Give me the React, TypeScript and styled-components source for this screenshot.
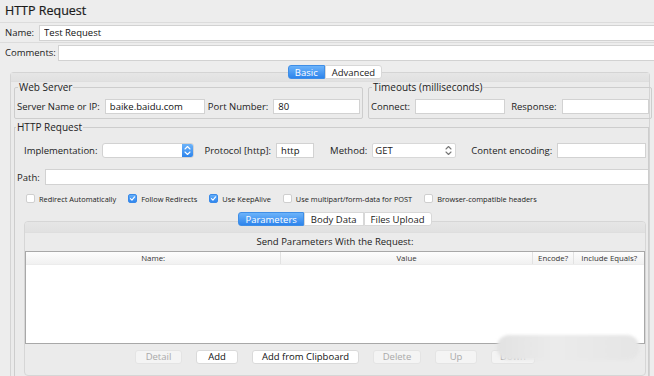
import React from "react";
import styled, { createGlobalStyle } from "styled-components";

const GlobalStyle = createGlobalStyle`
  html, body {
    margin: 0;
    padding: 0;
    background: #ededed;
    overflow: hidden;
  }
  body {
    font-family: "Open Sans", "DejaVu Sans", sans-serif;
    font-size: 9.5px;
    color: #222;
  }
`;

function CheckMark() {
  return (
    <svg width="9" height="9" viewBox="0 0 10 10">
      <path d="M2 5.2 L4.2 7.4 L8 2.6" fill="none" stroke="#fff" strokeWidth="1.6" strokeLinecap="round" strokeLinejoin="round" />
    </svg>
  );
}

function UpDown({ color }: { color: string }) {
  return (
    <svg width="7" height="11" viewBox="0 0 7 11">
      <path d="M1 4 L3.5 1.5 L6 4 M1 7 L3.5 9.5 L6 7" fill="none" stroke={color} strokeWidth="1.1" strokeLinecap="round" strokeLinejoin="round" />
    </svg>
  );
}

interface CheckProps {
  label: string;
  checked?: boolean;
}

function Check({ label, checked = false }: CheckProps) {
  return (
    <CheckItem>
      <CheckBox checked={checked}>{checked && <CheckMark />}</CheckBox>
      <CheckLabel>{label}</CheckLabel>
    </CheckItem>
  );
}

export default function App() {
  return (
    <Page>
      <GlobalStyle />
      <Title>HTTP Request</Title>
      <TopRow>
        <Label>Name:</Label>
        <WideInput value="Test Request" readOnly />
      </TopRow>
      <TopRow>
        <Label right={2}>Comments:</Label>
        <WideInput value="" readOnly />
      </TopRow>

      <TabBar top={3} shift={16} pad={6}>
        <Tab active>Basic</Tab>
        <Tab>Advanced</Tab>
      </TabBar>

      <OuterPanel>
        <PanelBand size={8} />
        <ServerRow>
          <Group grow={0} width={349}>
            <Legend>Web Server</Legend>
            <InlineRow>
              <Label>Server Name or IP:</Label>
              <Input width={100} value="baike.baidu.com" readOnly />
              <Label gap={3}>Port Number:</Label>
              <Input width={87} value="80" readOnly />
            </InlineRow>
          </Group>
          <Group grow={1}>
            <Legend>Timeouts (milliseconds)</Legend>
            <InlineRow>
              <Label>Connect:</Label>
              <Input width={90} value="" readOnly />
              <Label gap={6}>Response:</Label>
              <Input width={87} value="" readOnly />
            </InlineRow>
          </Group>
        </ServerRow>

        <RequestGroup>
          <Legend>HTTP Request</Legend>
          <ImplRow>
            <Label>Implementation:</Label>
            <Select width={92}>
              <span />
              <SelectArrow>
                <UpDown color="#fff" />
              </SelectArrow>
            </Select>
            <Label gap={10}>Protocol [http]:</Label>
            <Input width={38} value="http" readOnly />
            <Label gap={16}>Method:</Label>
            <PlainSelect width={84}>
              <span>GET</span>
              <UpDown color="#777" />
            </PlainSelect>
            <Label gap={15}>Content encoding:</Label>
            <Input width={89} value="" readOnly />
          </ImplRow>
          <PathRow>
            <Label>Path:</Label>
            <WideInput value="" readOnly />
          </PathRow>
          <CheckRow>
            <Check label="Redirect Automatically" />
            <Check label="Follow Redirects" checked />
            <Check label="Use KeepAlive" checked />
            <Check label="Use multipart/form-data for POST" />
            <Check label="Browser-compatible headers" />
          </CheckRow>

          <TabBar top={7} shift={7} pad={6}>
            <Tab active>Parameters</Tab>
            <Tab>Body Data</Tab>
            <Tab>Files Upload</Tab>
          </TabBar>

          <ParamPanel>
            <PanelBand size={10} />
            <ParamTitle>Send Parameters With the Request:</ParamTitle>
            <Table>
              <HeadRow>
                <HeadCell width={257}>Name:</HeadCell>
                <HeadCell width={253}>Value</HeadCell>
                <HeadCell width={42}>Encode?</HeadCell>
                <HeadCell width={70} last>Include Equals?</HeadCell>
              </HeadRow>
            </Table>
            <ButtonRow>
              <Button width={47} disabled>Detail</Button>
              <Button width={42}>Add</Button>
              <Button width={107}>Add from Clipboard</Button>
              <Button width={48} disabled>Delete</Button>
              <Button width={42} disabled>Up</Button>
              <Button width={44} disabled>Down</Button>
            </ButtonRow>
            <Smudge />
          </ParamPanel>
        </RequestGroup>
      </OuterPanel>
    </Page>
  );
}

const Page = styled.div`
  width: 654px;
  height: 376px;
  display: flex;
  flex-direction: column;
  background: #ededed;
`;

const Title = styled.div`
  height: 22px;
  padding-left: 5px;
  font-size: 12.5px;
  line-height: 22px;
  color: #1a1a1a;
  -webkit-text-stroke: 0.2px #1a1a1a;
`;

const TopRow = styled.div`
  display: flex;
  align-items: center;
  height: 17px;
  padding: 1px 0 1px 5px;
  border-top: 1px solid #dcdcdc;
`;

const Label = styled.span<{ gap?: number; right?: number }>`
  margin-left: ${({ gap }) => gap ?? 0}px;
  margin-right: ${({ right }) => right ?? 5}px;
  white-space: nowrap;
  font-size: 9.5px;
  color: #222;
`;

const inputBase = `
  box-sizing: border-box;
  height: 15px;
  border: 1px solid #d2d2d2;
  background: #fff;
  font-family: "Open Sans", "DejaVu Sans", sans-serif;
  font-size: 9.5px;
  color: #111;
  padding: 0 4px;
  outline: none;
`;

const WideInput = styled.input`
  ${inputBase}
  flex: 1;
  min-width: 0;
  border-right: none;
  height: 16px;
`;

const Input = styled.input<{ width: number }>`
  ${inputBase}
  flex: none;
  width: ${({ width }) => width}px;
`;

const TabBar = styled.div<{ top: number; shift: number; pad: number }>`
  position: relative;
  z-index: 1;
  display: flex;
  justify-content: center;
  margin-top: ${({ top }) => top}px;
  padding-left: ${({ shift }) => shift}px;
  height: 14px;

  & > div {
    padding: 0 ${({ pad }) => pad}px;
  }
`;

const Tab = styled.div<{ active?: boolean }>`
  box-sizing: border-box;
  height: 14px;
  font-size: 9.5px;
  line-height: 13px;
  border: 1px solid ${({ active }) => (active ? "#3f8ee6" : "#d8d8d8")};
  background: ${({ active }) => (active ? "linear-gradient(#6cb3fa, #2d84ec)" : "#fff")};
  color: ${({ active }) => (active ? "#fff" : "#222")};
  border-radius: ${({ active }) => (active ? "3px 0 0 3px" : "0")};
  &:last-child {
    border-radius: 0 3px 3px 0;
  }
`;

const OuterPanel = styled.div`
  flex: 1;
  margin: -7px 4px 0 10px;
  border: 1px solid #d4d4d4;
  border-bottom: none;
  border-radius: 4px 4px 0 0;
  background: #ebebeb;
  display: flex;
  flex-direction: column;
  padding: 0 0 0 3px;
`;

const PanelBand = styled.div<{ size: number }>`
  height: ${({ size }) => size}px;
  margin-left: -3px;
  background: linear-gradient(#e6e6e6, #e1e1e1);
  border-bottom: 1px solid #dedede;
`;

const ServerRow = styled.div`
  display: flex;
  gap: 5px;
`;

const Group = styled.fieldset<{ grow: number; width?: number }>`
  box-sizing: border-box;
  margin: 0;
  min-width: 0;
  flex: ${({ grow }) => grow} 0 auto;
  width: ${({ width }) => (width ? `${width}px` : "auto")};
  height: 37px;
  padding: 0 2px;
  border: 1px solid #cdcdcd;
  border-radius: 2px;
`;

const Legend = styled.legend`
  padding: 0 1px;
  margin-left: 1px;
  font-size: 10px;
  line-height: 10px;
  color: #222;
`;

const InlineRow = styled.div`
  display: flex;
  align-items: center;
  margin-top: 7px;
`;

const RequestGroup = styled.fieldset`
  flex: 1;
  margin: 3px 0 0 0;
  padding: 0;
  min-width: 0;
  border: 1px solid #cdcdcd;
  border-bottom: none;
  display: flex;
  flex-direction: column;
  min-height: 0;
`;

const ImplRow = styled.div`
  display: flex;
  align-items: center;
  padding-left: 9px;
  margin-top: 10px;
  height: 16px;
`;

const Select = styled.div<{ width: number }>`
  box-sizing: border-box;
  width: ${({ width }) => width}px;
  height: 15px;
  background: #fff;
  border: 1px solid #d2d2d2;
  border-radius: 3px;
  display: flex;
  justify-content: space-between;
  overflow: hidden;
`;

const SelectArrow = styled.div`
  width: 11px;
  background: linear-gradient(#6cb3fa, #2d84ec);
  display: flex;
  align-items: center;
  justify-content: center;
`;

const PlainSelect = styled.div<{ width: number }>`
  box-sizing: border-box;
  width: ${({ width }) => width}px;
  height: 15px;
  padding: 0 3px 0 2px;
  background: #fff;
  border: 1px solid #d8d8d8;
  border-radius: 2px;
  display: flex;
  align-items: center;
  justify-content: space-between;
  font-size: 9.5px;
`;

const PathRow = styled.div`
  display: flex;
  align-items: center;
  padding-left: 2px;
  margin-top: 11px;
  height: 16px;
`;

const CheckRow = styled.div`
  display: flex;
  align-items: center;
  padding-left: 11px;
  margin-top: 7px;
  gap: 12px;
  height: 13px;
`;

const CheckItem = styled.div`
  display: flex;
  align-items: center;
  gap: 4px;
`;

const CheckBox = styled.div<{ checked: boolean }>`
  box-sizing: border-box;
  width: 9px;
  height: 9px;
  border-radius: 2px;
  border: 1px solid ${({ checked }) => (checked ? "#3a8ae8" : "#cfcfcf")};
  background: ${({ checked }) => (checked ? "linear-gradient(#64aef9, #2f86ee)" : "#fff")};
  display: flex;
  align-items: center;
  justify-content: center;
`;

const CheckLabel = styled.span`
  font-size: 7.4px;
  color: #222;
  white-space: nowrap;
`;

const ParamPanel = styled.div`
  position: relative;
  flex: 1;
  margin: -5px 2px 0 9px;
  border: 1px solid #d6d6d6;
  border-radius: 4px;
  background: #ebebeb;
  display: flex;
  flex-direction: column;
  padding: 0;
  overflow: hidden;
`;

const ParamTitle = styled.div`
  text-align: center;
  font-size: 9.5px;
  line-height: 18px;
  height: 18px;
  color: #222;
`;

const Table = styled.div`
  height: 91px;
  background: #fff;
  border: 1px solid #a8a8a8;
`;

const HeadRow = styled.div`
  display: flex;
  height: 12px;
  background: linear-gradient(#fdfdfd, #f1f1f1);
  border-bottom: 1px solid #ececec;
`;

const HeadCell = styled.div<{ width: number; last?: boolean }>`
  box-sizing: border-box;
  width: ${({ width }) => width}px;
  text-align: center;
  font-size: 7.8px;
  line-height: 12px;
  color: #333;
  border-right: ${({ last }) => (last ? "none" : "1px solid #e2e2e2")};
  white-space: nowrap;
`;

const ButtonRow = styled.div`
  display: flex;
  justify-content: center;
  gap: 14px;
  padding: 6px 0;
`;

const Button = styled.button<{ width: number }>`
  box-sizing: border-box;
  width: ${({ width }) => width}px;
  height: 14px;
  padding: 0;
  border: 1px solid #dadada;
  border-radius: 3px;
  background: #fff;
  font-family: "Open Sans", "DejaVu Sans", sans-serif;
  font-size: 9.5px;
  line-height: 12px;
  color: #111;
  &:disabled {
    background: #f4f4f4;
    color: #a9a9a9;
    border-color: #e4e4e4;
  }
`;

const Smudge = styled.div`
  position: absolute;
  left: 472px;
  top: 113px;
  width: 142px;
  height: 25px;
  border-radius: 12px;
  background: linear-gradient(90deg, #e2e2e2, #ebebeb 40%, #e5e5e5);
  filter: blur(1.5px);
`;
